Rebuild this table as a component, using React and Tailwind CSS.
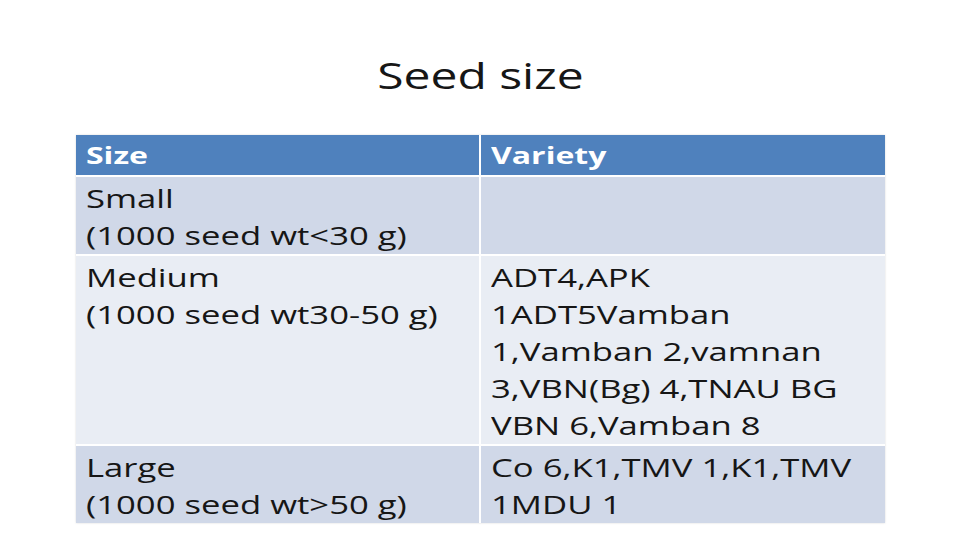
import React from 'react';

const rows = [
  {
    size: ['Small', '(1000 seed wt<30 g)'],
    variety: [],
    bg: 'bg-[#d0d8e8]',
  },
  {
    size: ['Medium', '(1000 seed wt30-50 g)'],
    variety: ['ADT4,APK', '1ADT5Vamban', '1,Vamban 2,vamnan', '3,VBN(Bg) 4,TNAU BG', 'VBN 6,Vamban 8'],
    bg: 'bg-[#e9edf4]',
  },
  {
    size: ['Large', '(1000 seed wt>50 g)'],
    variety: ['Co 6,K1,TMV 1,K1,TMV', '1MDU 1'],
    bg: 'bg-[#d0d8e8]',
  },
];

// the slide is stretched sideways, so text gets a horizontal scale
function Lines({ lines }) {
  return (
    <div className="w-fit origin-left scale-x-[1.333] whitespace-nowrap">
      {lines.map((l) => (
        <div key={l}>{l}</div>
      ))}
    </div>
  );
}

export default function App() {
  return (
    <div className="w-[960px] h-[540px] overflow-hidden bg-white flex flex-col text-[#161616]" style={{ fontFamily: '"Open Sans", sans-serif' }}>
      <div className="pt-[52px] flex justify-center">
        <h1 className="text-[36px] leading-[48px] scale-x-[1.333]">Seed size</h1>
      </div>
      <div className="mt-[35px] ml-[76px] w-[809px] grid grid-cols-[403px_404px] gap-[2px] bg-white shadow-[0_0_2px_rgba(0,0,0,0.15)]">
        <div className="bg-[#4f81bd] h-[40px] pl-[10px] text-white font-bold text-[24px] leading-[40px]">
          <div className="w-fit origin-left scale-x-[1.333]">Size</div>
        </div>
        <div className="bg-[#4f81bd] h-[40px] pl-[10px] text-white font-bold text-[24px] leading-[40px]">
          <div className="w-fit origin-left scale-x-[1.333]">Variety</div>
        </div>
        {rows.map((r) => (
          <React.Fragment key={r.size[0]}>
            <div className={`${r.bg} pl-[10px] pt-[3px] text-[26px] leading-[37px]`}>
              <Lines lines={r.size} />
            </div>
            <div className={`${r.bg} pl-[10px] pt-[3px] text-[26px] leading-[37px]`}>
              <Lines lines={r.variety} />
            </div>
          </React.Fragment>
        ))}
      </div>
    </div>
  );
}
